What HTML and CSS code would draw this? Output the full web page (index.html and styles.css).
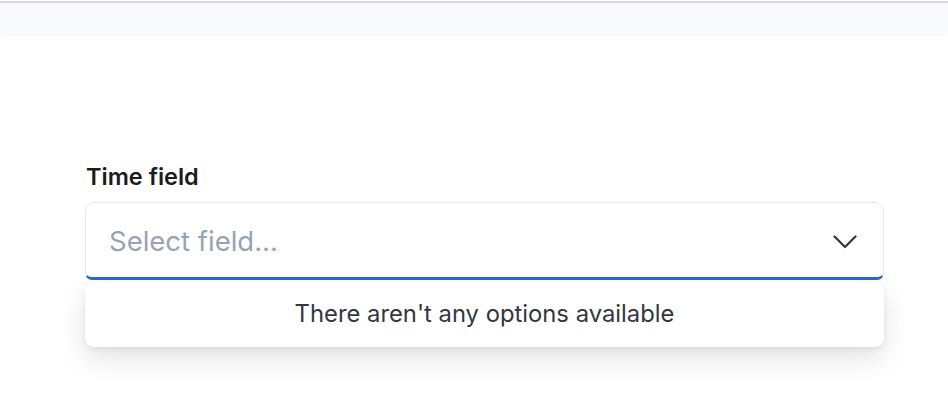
FILE: index.html
```html
<!DOCTYPE html>
<html>
<head>
<meta charset="utf-8">
<link rel="stylesheet" href="styles.css">
</head>
<body>
<div class="topbar"></div>
<main class="content">
  <div class="form-row">
    <label class="label">Time field</label>
    <div class="combo">
      <div class="control">
        <span class="placeholder">Select field...</span>
        <svg class="chevron" width="24" height="14" viewBox="0 0 24 14"><path d="M1.5 1.5 L12 12 L22.5 1.5" fill="none" stroke="#343741" stroke-width="2.2" stroke-linecap="round" stroke-linejoin="round"/></svg>
      </div>
      <div class="menu">There aren't any options available</div>
    </div>
  </div>
</main>
</body>
</html>
```

FILE: styles.css
```css
html, body {
  margin: 0;
  padding: 0;
  background: #ffffff;
  font-family: Inter, "Noto Sans", sans-serif;
}
body {
  min-height: 414px;
}
.topbar {
  margin-top: 1px;
  height: 31px;
  border-top: 2px solid #d3dae6;
  background: #f9fafc;
  box-shadow: 0 1px 2px rgba(0, 0, 0, 0.04);
}
.content {
  padding: 128px 64px 40px 85px;
}
.form-row {
  display: flex;
  flex-direction: column;
}
.label {
  font-size: 23.5px;
  font-weight: 600;
  color: #1a1c21;
  line-height: 30px;
  margin-bottom: 10px;
  padding-left: 1px;
}
.combo {
  display: flex;
  flex-direction: column;
  width: 799px;
}
.control {
  box-sizing: border-box;
  height: 78px;
  border: 1.5px solid #e3e8f2;
  border-bottom: 3.5px solid #2b6dc6;
  border-radius: 9px 9px 7px 7px;
  display: flex;
  align-items: center;
  justify-content: space-between;
  padding: 1px 26px 0 23px;
}
.placeholder {
  font-size: 27.5px;
  color: #98a2b3;
}
.chevron {
  display: block;
  margin-top: 2px;
}
.menu {
  margin-top: 2px;
  height: 65px;
  border-radius: 9px;
  background: #ffffff;
  box-shadow: 0 12px 28px rgba(0, 0, 0, 0.11), 0 2px 6px rgba(0, 0, 0, 0.07);
  display: flex;
  align-items: center;
  justify-content: center;
  font-size: 23.8px;
  color: #343741;
  padding-bottom: 2px;
  box-sizing: border-box;
}
```
